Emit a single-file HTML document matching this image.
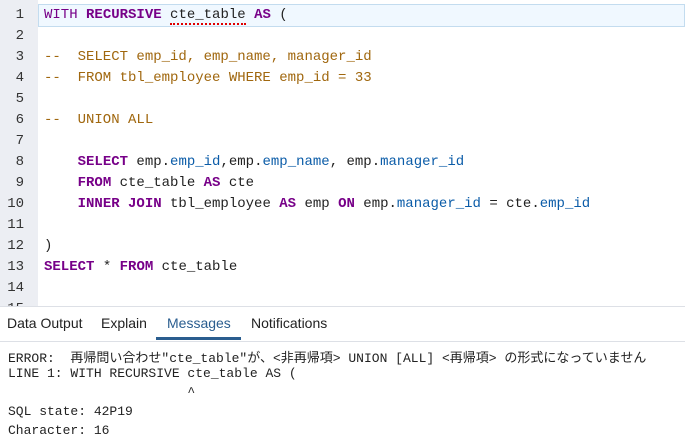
<!DOCTYPE html>
<html><head><meta charset="utf-8"><style>
body{margin:0;width:685px;height:447px;overflow:hidden;background:#fff;font-family:"Liberation Sans","Noto Sans CJK JP",sans-serif;}
.ed{position:absolute;left:0;top:0;width:685px;height:306px;overflow:hidden;}
.gut{position:absolute;left:0;top:0;width:38px;height:306px;background:#eceef3;}
.ln{position:absolute;left:0;width:24px;text-align:right;font:14px "Liberation Mono",monospace;color:#333;}
.cl{position:absolute;left:44px;font:14px "Liberation Mono",monospace;color:#222;white-space:pre;}
.k{color:#770088;font-weight:bold}.kw{color:#770088}
.c{color:#a0670e}.p{color:#0b5ca8}
.hl{position:absolute;left:38px;top:4px;width:645px;height:21px;background:#f0f8ff;border:1px solid #c3dcef;}
.tabs{position:absolute;left:0;top:306px;width:685px;height:34px;border-top:1px solid #dde0e6;border-bottom:1px solid #dde0e6;background:#fff;}
.t{position:absolute;top:8px;font-size:14px;color:#222;}
.msg{position:absolute;left:8px;font:13px "Liberation Mono","Noto Sans CJK JP",monospace;color:#222;white-space:pre;}
</style></head><body>
<div class="ed">
<div class="gut"></div>
<div class="hl"></div>
<div class="ln" style="top:7px">1</div><div class="ln" style="top:28px">2</div><div class="ln" style="top:49px">3</div><div class="ln" style="top:70px">4</div><div class="ln" style="top:91px">5</div><div class="ln" style="top:112px">6</div><div class="ln" style="top:133px">7</div><div class="ln" style="top:154px">8</div><div class="ln" style="top:175px">9</div><div class="ln" style="top:196px">10</div><div class="ln" style="top:217px">11</div><div class="ln" style="top:238px">12</div><div class="ln" style="top:259px">13</div><div class="ln" style="top:280px">14</div><div class="ln" style="top:301px">15</div>
<div class="cl" style="top:7px"><span class="kw">WITH</span> <span class="k">RECURSIVE</span> <span style="border-bottom:2px dotted #e00000">cte_table</span> <span class="k">AS</span> (</div>
<div class="cl c" style="top:49px">--  SELECT emp_id, emp_name, manager_id</div>
<div class="cl c" style="top:70px">--  FROM tbl_employee WHERE emp_id = 33</div>
<div class="cl c" style="top:112px">--  UNION ALL</div>
<div class="cl" style="top:154px">    <span class="k">SELECT</span> emp.<span class="p">emp_id</span>,emp.<span class="p">emp_name</span>, emp.<span class="p">manager_id</span></div>
<div class="cl" style="top:175px">    <span class="k">FROM</span> cte_table <span class="k">AS</span> cte</div>
<div class="cl" style="top:196px">    <span class="k">INNER JOIN</span> tbl_employee <span class="k">AS</span> emp <span class="k">ON</span> emp.<span class="p">manager_id</span> = cte.<span class="p">emp_id</span></div>
<div class="cl" style="top:238px">)</div>
<div class="cl" style="top:259px"><span class="k">SELECT</span> * <span class="k">FROM</span> cte_table</div>
</div>
<div class="tabs">
<div class="t" style="left:7px">Data Output</div>
<div class="t" style="left:101px">Explain</div>
<div class="t" style="left:167px;color:#2a5d8f">Messages</div>
<div class="t" style="left:251px">Notifications</div>
<div style="position:absolute;left:156px;top:30px;width:85px;height:3px;background:#2a5d8f"></div>
</div>
<div class="msg" style="top:347px">ERROR:  再帰問い合わせ"cte_table"が、&lt;非再帰項&gt; UNION [ALL] &lt;再帰項&gt; の形式になっていません</div>
<div class="msg" style="top:366px">LINE 1: WITH RECURSIVE cte_table AS (</div>
<div class="msg" style="top:385px">                       ^</div>
<div class="msg" style="top:404px">SQL state: 42P19</div>
<div class="msg" style="top:423px">Character: 16</div>
</body></html>
